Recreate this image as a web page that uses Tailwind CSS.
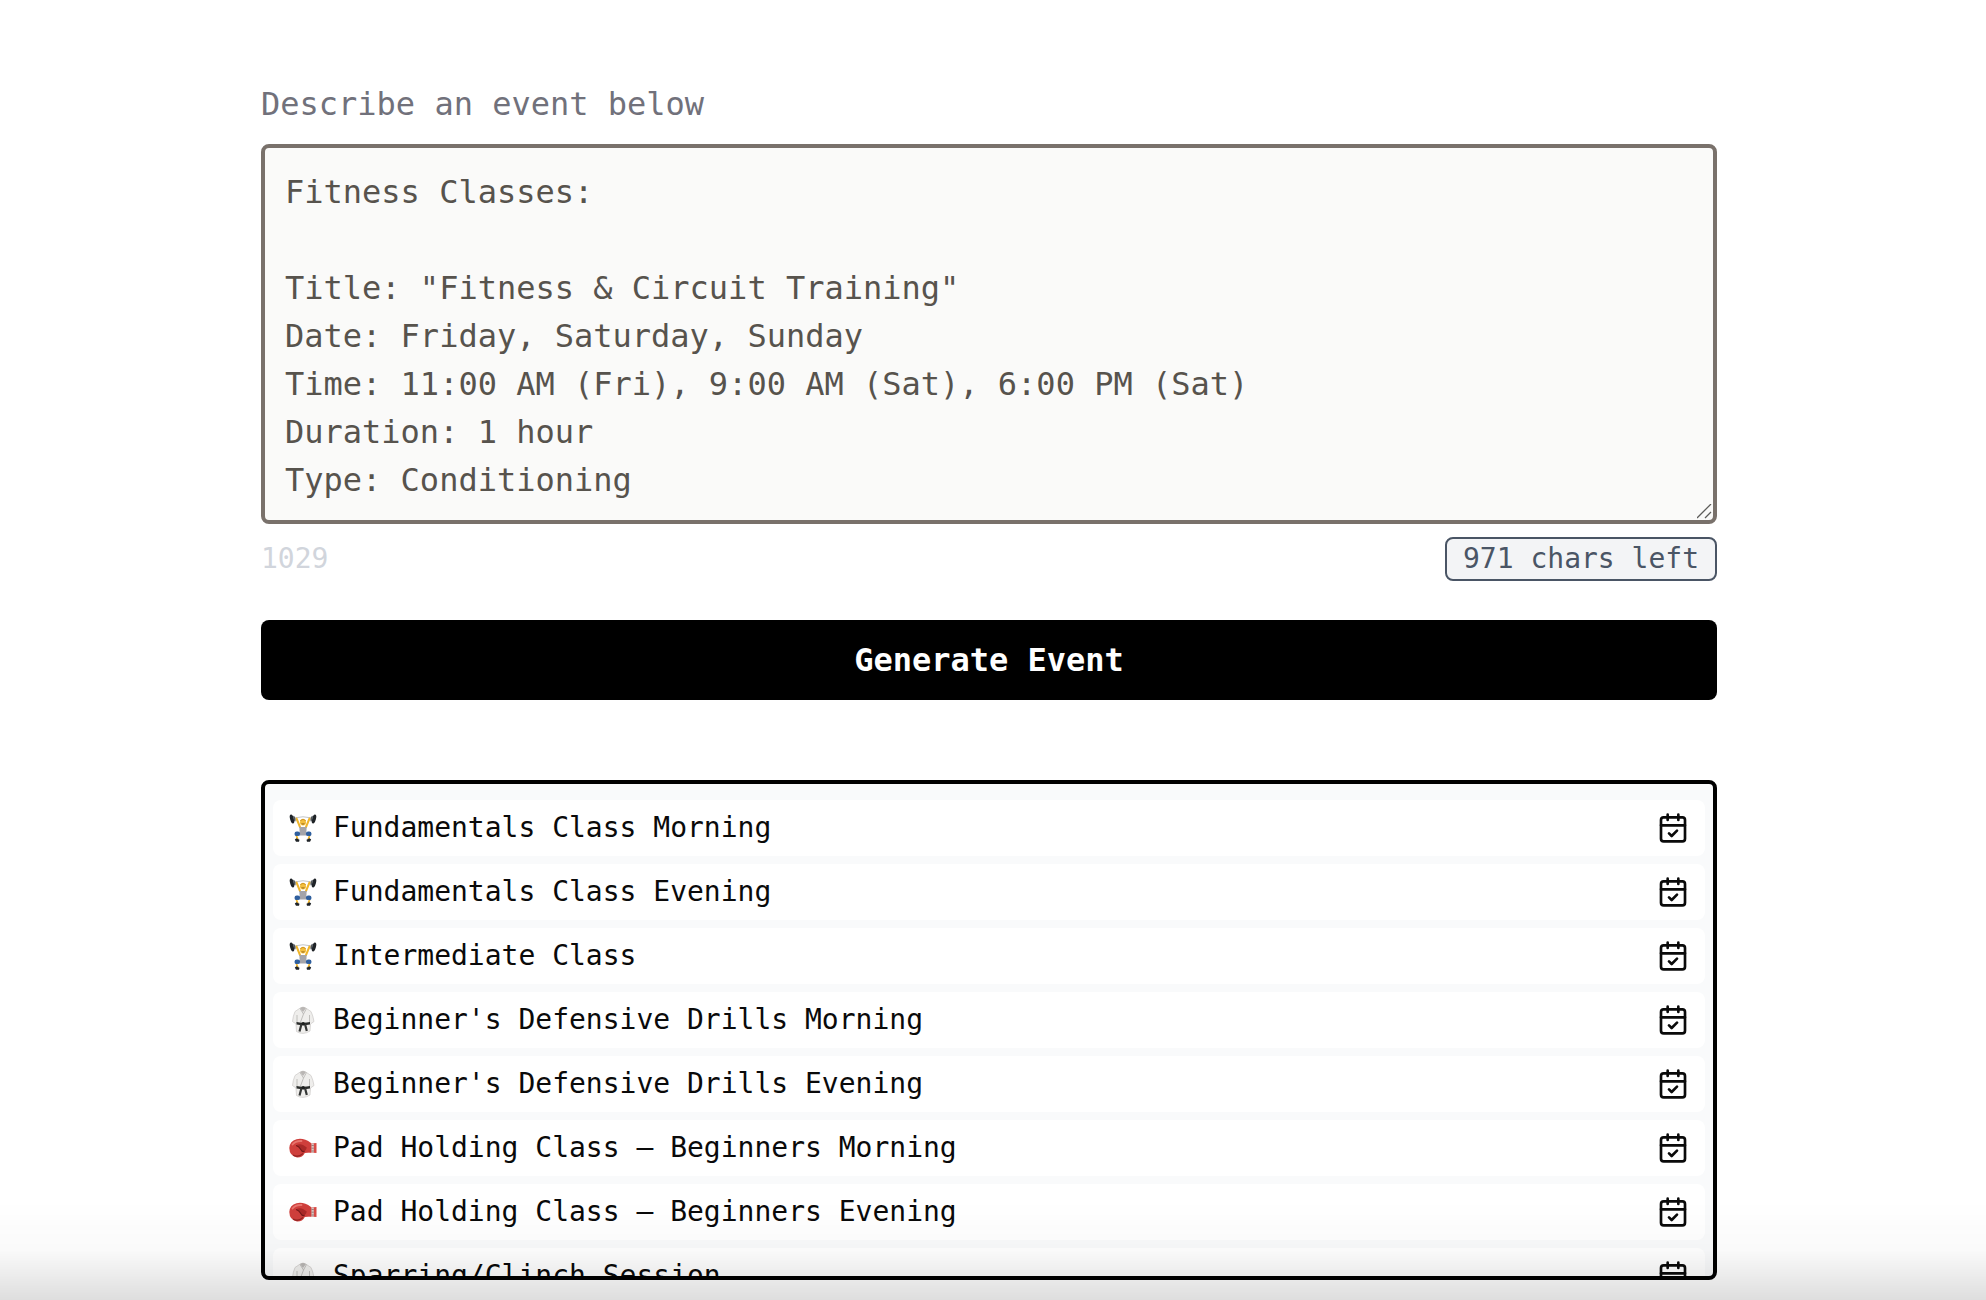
<!DOCTYPE html>
<html lang="en">
<head>
    <meta charset="UTF-8">
    <meta name="viewport" content="width=device-width, initial-scale=1.0">
    <title>Event Generator</title>
    <script src="https://cdn.jsdelivr.net/npm/@tailwindcss/browser@4"></script>
</head>
<body class="bg-white pr-2 font-['DejaVu_Sans_Mono',monospace]">

    <!-- Icon definitions -->
    <svg class="hidden">
        <symbol id="calendar" viewBox="0 0 24 24">
            <g fill="none" stroke="currentColor" stroke-width="2" stroke-linecap="round" stroke-linejoin="round">
                <path d="M8 2v4M16 2v4M3 10h18M9 16l2 2 4-4"/>
                <rect x="3" y="4" width="18" height="18" rx="2"/>
            </g>
        </symbol>
        <symbol id="lifter" viewBox="0 0 28 28">
            <path d="M5 4Q14 1.500 23 4" fill="none" stroke="#c3c6ca" stroke-width="1"/>
            <path d="M7.500 4.500l3.500 8.500M20.500 4.500l-3.500 8.500" stroke="#efb52c" stroke-width="2" stroke-linecap="round"/>
            <ellipse cx="3" cy="5" rx="1.900" ry="4.600" fill="#1f2327" transform="rotate(-16 3 5)"/>
            <ellipse cx="5.400" cy="4.600" rx="1" ry="3" fill="#50565c" transform="rotate(-16 5.400 4.600)"/>
            <ellipse cx="25" cy="5" rx="1.900" ry="4.600" fill="#1f2327" transform="rotate(16 25 5)"/>
            <ellipse cx="22.600" cy="4.600" rx="1" ry="3" fill="#50565c" transform="rotate(16 22.600 4.600)"/>
            <path d="M10.300 13h7.400l-.6 8.500h-6.200z" fill="#a4a4a9"/>
            <circle cx="14" cy="8.500" r="3" fill="#f3bf3e"/>
            <path d="M11.300 7q2.700-3.400 5.400 0" fill="none" stroke="#d59a20" stroke-width="1.200"/>
            <path d="M12.600 9.600q1.400 1.200 2.800 0" fill="none" stroke="#8a5a17" stroke-width=".9"/>
            <rect x="5.500" y="17.500" width="5.600" height="4.600" rx="2.200" fill="#2f5f9e"/>
            <rect x="16.900" y="17.500" width="5.600" height="4.600" rx="2.200" fill="#2f5f9e"/>
            <path d="M7.500 22l1.300 3.500M20.500 22l-1.300 3.500" stroke="#efb52c" stroke-width="1.800"/>
            <path d="M5.800 25.500l1.700-1.300 3 1.500-.5 2H7zM22.200 25.500l-1.700-1.300-3 1.500.5 2h3z" fill="#1f2327"/>
        </symbol>
        <symbol id="gi" viewBox="0 0 28 28">
            <path d="M10.500 2.500Q14-.5 17.500 2.500l4.500 3q2 4 3 10l-3.500 2.500-.5 7Q14 29.500 7.500 25.500L7 18l-3.500-2.500Q4 10 6 5.500z" fill="#efeeec" stroke="#cbc9c7" stroke-width=".7"/>
            <path d="M11 2q3-1.800 6 0l-3 4z" fill="#b9b6b4"/>
            <path d="M11 2.500l3.500 5.500-3 8M17.500 2.500l-3 5.500M8 9v8M20.500 9v8" fill="none" stroke="#b4b2b0" stroke-width=".8"/>
            <path d="M7.500 16q6.500 1.500 13.500 0v2.500q-6.500 1.500-13.500 0z" fill="#2b2d2c"/>
            <path d="M12.500 18l-2 7.500M16 18l1.800 7" stroke="#353736" stroke-width="2.200"/>
            <circle cx="14.200" cy="17.800" r="1.700" fill="#1c1e1d"/>
        </symbol>
        <symbol id="glove" viewBox="0 0 28 28">
            <path d="M20.500 9.500l7-.5v10l-7-.5z" fill="#d94b46"/>
            <path d="M22.500 9.400h2.300v9.300h-2.300z" fill="#d5c8c4"/>
            <path d="M22.500 11.500h2.300M22.500 14.200h2.300M22.500 17h2.300" stroke="#8d6a67" stroke-width=".8"/>
            <path d="M.3 14Q.8 7 7.500 5.300 14.500 3.500 22 9v9.500l-6.200.5Q13.500 23.700 8 23.500.5 22 .3 14z" fill="#cf3f3c"/>
            <path d="M3.500 10.500Q6.500 6.700 12.500 7" fill="none" stroke="#e8756e" stroke-width="1.800" stroke-linecap="round"/>
            <path d="M7 11.500q3-2 7-.6l3.800 2.600q-.8 4-4.300 4.200-2.500-3.700-6.500-6.200z" fill="#aa2928"/>
            <path d="M7 11.500q3.200.7 4.600 3.700t4 2.200" fill="none" stroke="#741919" stroke-width="1.100"/>
            <path d="M4 21q5 3 10-1.500" fill="none" stroke="#962523" stroke-width="1.400"/>
        </symbol>
    </svg>

    <main class="mx-auto max-w-[1456px] pt-20">

        <!-- Event form -->
        <form>
            <label for="description" class="block text-[32px] leading-[48px] text-zinc-500">Describe an event below</label>
            <div class="relative mt-4">
                <textarea id="description" class="block h-[380px] w-full resize-none overflow-hidden rounded-lg border-4 border-stone-500 bg-stone-50 p-5 text-[32px] leading-[48px] text-stone-600 outline-none">Fitness Classes:

Title: "Fitness &amp; Circuit Training"
Date: Friday, Saturday, Sunday
Time: 11:00 AM (Fri), 9:00 AM (Sat), 6:00 PM (Sat)
Duration: 1 hour
Type: Conditioning</textarea>
                <!-- Resize grip -->
                <svg class="pointer-events-none absolute right-1 bottom-1 size-4" viewBox="0 0 16 16" aria-hidden="true">
                    <path d="M0 14L14 0M8 14l6-6" stroke="#5c5c5a" stroke-width="1.3"/>
                </svg>
            </div>
            <div class="mt-[13px] flex items-center justify-between text-[28px] leading-10">
                <span class="text-gray-300">1029</span>
                <span class="rounded-lg border-2 border-gray-600 bg-gray-100 px-4 text-gray-600">971 chars left</span>
            </div>
            <button type="button" class="mt-[39px] w-full rounded-lg bg-black py-4 text-[32px] leading-[48px] font-bold text-white">Generate Event</button>
        </form>

        <!-- Generated events -->
        <ul id="events" class="mt-20 flex h-[500px] flex-col gap-2 overflow-hidden rounded-lg border-4 border-black bg-gray-50 px-2 py-4 text-[28px] leading-10 text-neutral-950"></ul>
    </main>

    <!-- Bottom fade -->
    <div class="pointer-events-none fixed inset-x-0 bottom-0 h-[100px] bg-linear-to-b from-transparent via-black/2 via-50% to-black/13"></div>

    <script>
        const events = [
            ['lifter', 'Fundamentals Class Morning'],
            ['lifter', 'Fundamentals Class Evening'],
            ['lifter', 'Intermediate Class'],
            ['gi', "Beginner's Defensive Drills Morning"],
            ['gi', "Beginner's Defensive Drills Evening"],
            ['glove', 'Pad Holding Class – Beginners Morning'],
            ['glove', 'Pad Holding Class – Beginners Evening'],
            ['gi', 'Sparring/Clinch Session'],
        ];

        document.getElementById('events').innerHTML = events.map(([icon, title]) => `
            <li class="flex shrink-0 items-center gap-4 rounded-lg bg-white px-4 py-2">
                <svg class="size-7" aria-hidden="true"><use href="#${icon}"/></svg>
                <span class="grow">${title}</span>
                <button type="button" aria-label="Add ${title} to calendar">
                    <svg class="block size-8"><use href="#calendar"/></svg>
                </button>
            </li>`).join('');
    </script>
</body>
</html>
